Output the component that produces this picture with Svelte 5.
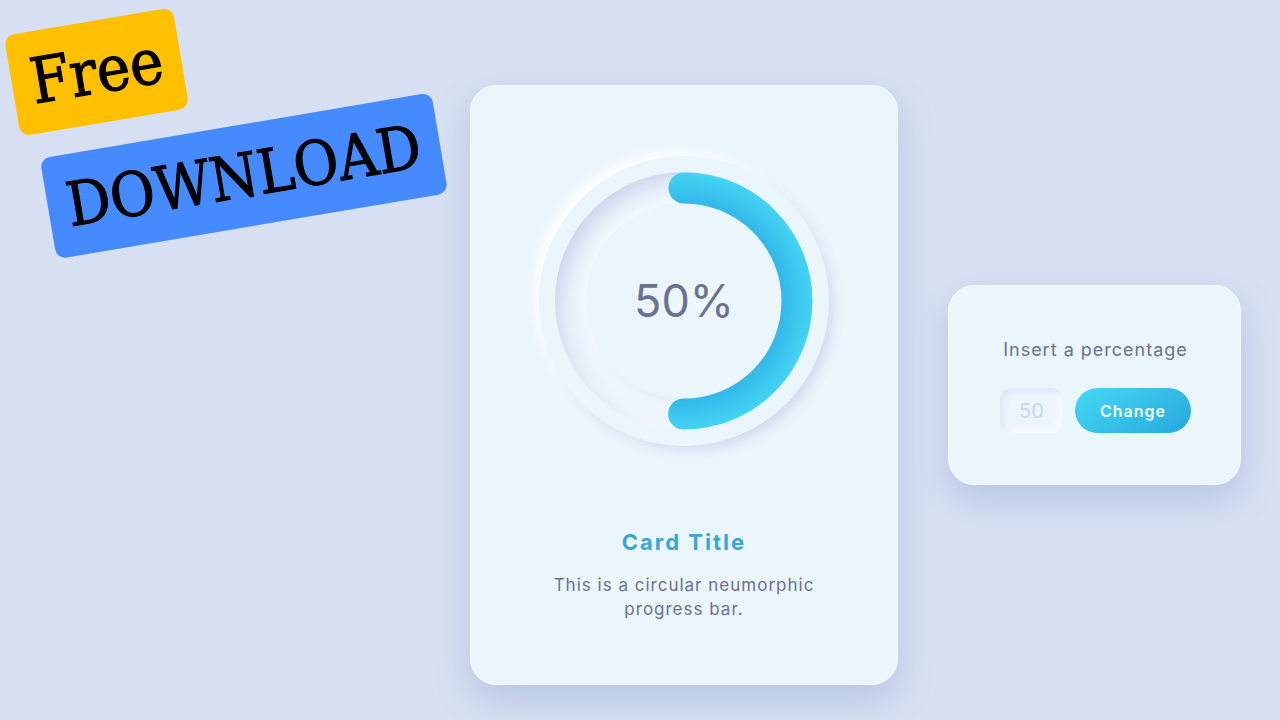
<script lang="ts">
	const radius = 113;
	const circumference = 2 * Math.PI * radius;

	let percentage = 50;
	let inputValue: number | null = null;

	$: offset = circumference * (1 - percentage / 100);

	function changePercentage() {
		if (inputValue === null) return;
		percentage = Math.min(100, Math.max(0, inputValue));
	}
</script>

<div class="page">
	<div class="banner">
		<div class="tags">
			<span class="tag free">Free</span>
			<span class="tag download">DOWNLOAD</span>
		</div>
	</div>

	<main class="content">
		<section class="card">
			<div class="ring">
				<div class="track">
					<div class="inner">{percentage}%</div>
				</div>
				<svg class="progress" viewBox="0 0 290 290" aria-hidden="true">
					<defs>
						<radialGradient id="stroke" gradientUnits="userSpaceOnUse" cx="145" cy="145" r="129">
							<stop offset="0.74" stop-color="#31b6e8" />
							<stop offset="1" stop-color="#44d4f4" />
						</radialGradient>
					</defs>
					<circle
						cx="145"
						cy="145"
						r={radius}
						transform="rotate(-90 145 145)"
						stroke-dasharray={circumference}
						stroke-dashoffset={offset}
					/>
				</svg>
			</div>
			<h1>Card Title</h1>
			<p>This is a circular neumorphic progress bar.</p>
		</section>

		<form class="panel" on:submit|preventDefault={changePercentage}>
			<label for="percentage">Insert a percentage</label>
			<div class="row">
				<input id="percentage" type="number" min="0" max="100" placeholder="50" bind:value={inputValue} />
				<button type="submit">Change</button>
			</div>
		</form>
	</main>
</div>

<style>
	:global(body) {
		background: #d7e0f2;
		margin: 0;
	}

	.page {
		box-sizing: border-box;
		color: #6c7190;
		display: flex;
		font-family: Inter, "Liberation Sans", sans-serif;
		justify-content: space-between;
		min-height: 100vh;
		overflow: hidden;
	}

	.banner {
		flex: none;
		padding-left: 20px;
	}

	.tags {
		align-items: flex-start;
		display: flex;
		flex-direction: column;
		gap: 25px;
		transform: rotate(-9.6deg);
	}

	.tag {
		-webkit-text-stroke: 1px #000;
		border-radius: 10px;
		color: #000;
		font-family: "DejaVu Serif Condensed", "DejaVu Serif", serif;
		line-height: 102px;
	}

	.free {
		background: #ffc000;
		font-size: 63px;
		padding: 0 19px;
	}

	.download {
		background: #468aff;
		font-size: 61px;
		margin-left: 15px;
		padding: 0 19px;
	}

	.content {
		align-items: center;
		display: flex;
		gap: 50px;
		margin-left: auto;
		padding: 50px 39px 0 0;
	}

	.card,
	.panel {
		background: #eaf5fc;
		border: 1px solid #f6fbff;
		border-radius: 26px;
		box-shadow: 0 15px 35px rgba(100, 130, 185, .28);
		box-sizing: border-box;
		flex: none;
		text-align: center;
	}

	.card {
		align-items: center;
		display: flex;
		flex-direction: column;
		padding: 70px 68px 63px;
		width: 428px;
	}

	.ring {
		border-radius: 50%;
		box-shadow: 6px 6px 12px -2px #d3d9ef, -6px -6px 12px -1px #fff;
		box-sizing: border-box;
		padding: 16px;
		position: relative;
	}

	.track {
		background: #ecf4fc;
		border-radius: 50%;
		box-shadow: inset 10px 10px 20px -6px #c8d0ea, inset -6px -6px 14px -2px #f8fbff;
		box-sizing: border-box;
		padding: 31px;
	}

	.inner {
		align-items: center;
		background: #eaf5fc;
		border-radius: 50%;
		box-shadow: -3px -3px 6px #f3f8fe, 2px 2px 4px #e1e8f6;
		display: flex;
		font-size: 45px;
		font-weight: 400;
		height: 196px;
		justify-content: center;
		line-height: 54px;
		width: 196px;
	}

	.progress {
		inset: 0;
		position: absolute;
	}

	.progress circle {
		fill: none;
		stroke: url(#stroke);
		stroke-linecap: round;
		stroke-width: 31px;
	}

	h1 {
		color: #38a6d6;
		font-size: 22px;
		font-weight: 700;
		letter-spacing: 2px;
		line-height: 28px;
		margin: 82px 0 17px;
	}

	p {
		font-size: 17px;
		letter-spacing: 1px;
		line-height: 24px;
		margin: 0;
	}

	.panel {
		display: flex;
		flex-direction: column;
		gap: 26px;
		padding: 52px 49px 51px 51px;
	}

	label {
		font-size: 18px;
		letter-spacing: 1px;
		line-height: 24px;
	}

	.row {
		display: flex;
		gap: 12px;
	}

	input,
	button {
		border: none;
		box-sizing: border-box;
		font-family: inherit;
		height: 45px;
	}

	input {
		appearance: textfield;
		background: #ecf4fc;
		border-radius: 12px;
		box-shadow: inset 3px 3px 6px #dbe5f4, inset -4px -4px 6px #fafcff;
		color: #6c7190;
		font-size: 20px;
		outline: none;
		padding: 0;
		text-align: center;
		width: 63px;
	}

	input::-webkit-inner-spin-button {
		appearance: none;
		margin: 0;
	}

	input::placeholder {
		color: #c5d8ee;
	}

	button {
		background: linear-gradient(145deg, #45d9f5, #27a8dc);
		border-radius: 23px;
		color: #f0fbff;
		cursor: pointer;
		font-size: 16px;
		font-weight: 600;
		letter-spacing: 1px;
		padding: 0;
		width: 116px;
	}
</style>
